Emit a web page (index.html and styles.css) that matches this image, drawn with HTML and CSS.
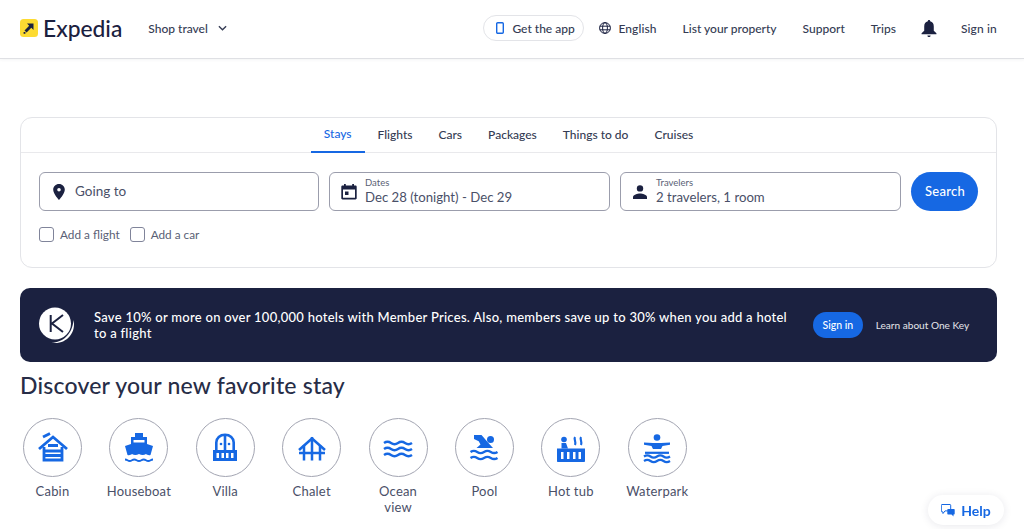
FILE: index.html
```html
<!DOCTYPE html>
<html lang="en">
<head>
  <meta charset="UTF-8" />
  <meta name="viewport" content="width=device-width, initial-scale=1" />
  <title>Expedia</title>
  <link rel="stylesheet" href="styles.css">
</head>
<body>

  <header class="topbar">
    <a class="logo">
      <svg class="logo-mark" viewBox="0 0 18 18" width="18" height="18">
        <rect width="18" height="18" rx="3.5" fill="#fddb32"/>
        <path d="M7 4.500h6.500V11L11.300 8.800 6.600 13.500 4.500 11.400l4.700-4.700z" fill="#1b2140"/>
        <rect x="3.600" y="13" width="1.800" height="1.800" fill="#1b2140"/>
      </svg>
      <span class="logo-text">Expedia</span>
    </a>
    <a class="nav-link shop">Shop travel
      <svg viewBox="0 0 10 6" width="9" height="6"><path d="M1 1l4 4 4-4" fill="none" stroke="#343b53" stroke-width="1.500"/></svg>
    </a>
    <nav class="nav-right">
      <a class="app-btn">
        <svg viewBox="0 0 8 12" width="8" height="12"><rect x=".7" y=".7" width="6.600" height="10.600" rx="1" fill="none" stroke="#1668e3" stroke-width="1.400"/></svg>
        Get the app
      </a>
      <a class="nav-link lang">
        <svg viewBox="0 0 12 12" width="12" height="12" fill="none" stroke="#1b2140" stroke-width="1">
          <circle cx="6" cy="6" r="5.400"/><ellipse cx="6" cy="6" rx="2.400" ry="5.400"/><path d="M.8 4.200h10.400M.8 7.800h10.400"/>
        </svg>
        English
      </a>
      <a class="nav-link">List your property</a>
      <a class="nav-link">Support</a>
      <a class="nav-link">Trips</a>
      <svg class="bell" viewBox="0 0 14 16" width="16" height="17"><path d="M7 0c.7 0 1.100.5 1.100 1.200 2.300.5 3.400 2.400 3.400 4.800v4L14 12.500V13.500H0V12.500L2.500 10V6c0-2.400 1.100-4.300 3.400-4.800C5.900.5 6.300 0 7 0zM5.500 14.500h3C8.500 15.400 7.800 16 7 16s-1.500-.6-1.500-1.500z" fill="#1b2140"/></svg>
      <a class="nav-link signin">Sign in</a>
    </nav>
  </header>

  <main class="content">
    <section class="search-card">
      <div class="tabs">
        <a class="tab active">Stays</a>
        <a class="tab">Flights</a>
        <a class="tab">Cars</a>
        <a class="tab">Packages</a>
        <a class="tab">Things to do</a>
        <a class="tab">Cruises</a>
      </div>
      <div class="search-body">
        <div class="fields">
          <div class="field">
            <svg viewBox="-2 0 16 16" width="16" height="16"><path fill-rule="evenodd" d="M6 0c3.300 0 5.800 2.500 5.800 5.700C11.800 9.800 6 16 6 16S.2 9.800.2 5.700C.2 2.500 2.700 0 6 0zm0 4a1.800 1.800 0 100 3.600A1.800 1.800 0 006 4z" fill="#1b2140"/></svg>
            <span class="placeholder">Going to</span>
          </div>
          <div class="field">
            <svg viewBox="0 0 16 16" width="16" height="16"><path fill-rule="evenodd" d="M3 0h1.800v1.500h6.400V0H13v1.500h1.500c.6 0 1.200.6 1.200 1.200v11.600c0 .6-.6 1.200-1.200 1.200h-13C.9 15.500.3 14.900.3 14.300V2.700c0-.6.600-1.200 1.200-1.200H3zM2 5.500v8.300h12V5.500z" fill="#1b2140"/><rect x="4" y="7.500" width="3.500" height="3.500" fill="#1b2140"/></svg>
            <div class="field-text">
              <span class="field-label">Dates</span>
              <span class="field-value">Dec 28 (tonight) - Dec 29</span>
            </div>
          </div>
          <div class="field">
            <svg viewBox="-1 0 16 14" width="16" height="14"><circle cx="7" cy="3.400" r="3.200" fill="#1b2140"/><path d="M0 14v-2c0-2.300 4.500-3.500 7-3.500s7 1.200 7 3.500v2z" fill="#1b2140"/></svg>
            <div class="field-text">
              <span class="field-label">Travelers</span>
              <span class="field-value">2 travelers, 1 room</span>
            </div>
          </div>
          <button class="search-btn">Search</button>
        </div>
        <div class="checks">
          <label class="check"><span class="box"></span>Add a flight</label>
          <label class="check"><span class="box"></span>Add a car</label>
        </div>
      </div>
    </section>

    <section class="banner">
      <svg class="onekey" viewBox="0 0 38 38" width="38" height="38">
        <circle cx="16" cy="16.500" r="16" fill="#fff"/>
        <path d="M34.500 13C37.500 26 27 38 12.500 35.800 24 35.500 33.500 27 34.500 13z" fill="#fff"/>
        <path d="M11.700 8v17M24 8l-11 8.500L24 25" fill="none" stroke="#1b2140" stroke-width="2"/>
      </svg>
      <p class="banner-text">Save 10% or more on over 100,000 hotels with Member Prices. Also, members save up to 30% when you add a hotel to a flight</p>
      <a class="banner-signin">Sign in</a>
      <a class="banner-link">Learn about One Key</a>
    </section>

    <h2 class="section-title">Discover your new favorite stay</h2>

    <div class="stays">
      <div class="stay">
        <div class="stay-icon">
          <svg viewBox="0 0 36 36" width="36" height="36" fill="none" stroke="#1668e3" stroke-width="2.800">
            <path d="M4 19L18 7l14 12"/><path d="M9 17v14.500M27 17v14.500M13 15.500h10M8 21h20M8 25.500h20M8 30h20"/>
            <path d="M8 7l7-3.500"/>
          </svg>
        </div>
        <span class="stay-name">Cabin</span>
      </div>
      <div class="stay">
        <div class="stay-icon">
          <svg viewBox="0 0 36 36" width="36" height="36">
            <g fill="#1668e3">
              <path d="M14 3h8v4h-8z"/>
              <path fill-rule="evenodd" d="M10 7h16v7l6 2-2.500 9c-2 .5-3.500-.2-4.500-1-2 1.300-4.500 1.300-7 0-2.500 1.300-5 1.300-7 0-1 .8-2.500 1.500-4.500 1L4 16l6-2zm2.500 3v2.500h11V10z"/>
            </g>
            <path d="M4 29.500c2.500 0 2.500 1.500 4.700 1.500s2.300-1.500 4.600-1.500 2.300 1.500 4.700 1.500 2.400-1.500 4.700-1.500 2.300 1.500 4.600 1.500 2.300-1.500 4.700-1.500" fill="none" stroke="#1668e3" stroke-width="1.800"/>
          </svg>
        </div>
        <span class="stay-name">Houseboat</span>
      </div>
      <div class="stay">
        <div class="stay-icon">
          <svg viewBox="0 0 36 36" width="36" height="36">
            <path d="M9.300 20v-7.500C9.300 8 13 4.800 18 4.800s8.700 3.200 8.700 7.700V20M18 5v15" fill="none" stroke="#1668e3" stroke-width="2.600"/>
            <circle cx="14" cy="14" r="1.300" fill="#1668e3"/><circle cx="22" cy="14" r="1.300" fill="#1668e3"/>
            <path fill-rule="evenodd" d="M6 20h24v11H6zm3.500 3v5h2.500v-5zm5 0v5H17v-5zm4.500 0v5h2.500v-5zm5 0v5h2.500v-5z" fill="#1668e3"/>
          </svg>
        </div>
        <span class="stay-name">Villa</span>
      </div>
      <div class="stay">
        <div class="stay-icon">
          <svg viewBox="0 0 36 36" width="36" height="36" fill="none" stroke="#1668e3" stroke-width="2.500">
            <path d="M5 20L18 8.500 31 20"/><path d="M10 15v15.500M18 7v23.500M26 15v15.500M5 23h26"/>
          </svg>
        </div>
        <span class="stay-name">Chalet</span>
      </div>
      <div class="stay">
        <div class="stay-icon">
          <svg viewBox="0 0 36 36" width="36" height="36" fill="none" stroke="#1668e3" stroke-width="2.500">
            <path d="M4 13c2.400-1.600 4.700-1.600 7 0s4.700 1.600 7 0 4.700-1.600 7 0 4.700 1.600 7 0"/>
            <path d="M4 19c2.400-1.600 4.700-1.600 7 0s4.700 1.600 7 0 4.700-1.600 7 0 4.700 1.600 7 0"/>
            <path d="M4 25c2.400-1.600 4.700-1.600 7 0s4.700 1.600 7 0 4.700-1.600 7 0 4.700 1.600 7 0"/>
          </svg>
        </div>
        <span class="stay-name">Ocean<br>view</span>
      </div>
      <div class="stay">
        <div class="stay-icon">
          <svg viewBox="0 0 36 36" width="36" height="36">
            <circle cx="24.500" cy="9.500" r="3.500" fill="#1668e3"/>
            <path d="M8 5h7.500l6.500 7.500 5 5.500H10.500l4-3.500-1.800-3.200L8 9z" fill="#1668e3"/>
            <path d="M4.500 22c2.300-1.500 4.500-1.500 6.700 0s4.500 1.500 6.800 0 4.500-1.500 6.800 0 4.400 1.500 6.700 0M4.500 28c2.300-1.500 4.500-1.500 6.700 0s4.500 1.500 6.800 0 4.500-1.500 6.800 0 4.400 1.500 6.700 0" fill="none" stroke="#1668e3" stroke-width="2.400"/>
          </svg>
        </div>
        <span class="stay-name">Pool</span>
      </div>
      <div class="stay">
        <div class="stay-icon">
          <svg viewBox="0 0 36 36" width="36" height="36">
            <circle cx="11" cy="9.500" r="2.800" fill="#1668e3"/>
            <path d="M22 7c-1.500 2.500 1.500 4.500 0 8M28 7c-1.500 2.500 1.500 4.500 0 8" fill="none" stroke="#1668e3" stroke-width="2.200"/>
            <path d="M8.500 13h4.500l2 5.500H8.500z" fill="#1668e3"/>
            <path fill-rule="evenodd" d="M4 18.500h28V31c0 .6-.5 1-1 1H5c-.6 0-1-.4-1-1zm4 3.500v7h2.500v-7zm6 0v7h2.500v-7zm6 0v7h2.500v-7zm5.500 0v7H28v-7z" fill="#1668e3"/>
          </svg>
        </div>
        <span class="stay-name">Hot tub</span>
      </div>
      <div class="stay">
        <div class="stay-icon">
          <svg viewBox="0 0 36 36" width="36" height="36">
            <circle cx="18" cy="7.500" r="3.300" fill="#1668e3"/>
            <path d="M5 12.500l9 .5h8l9-.5v2.200l-7.500 1.300-1.500 3h-8l-1.500-3L5 14.700z" fill="#1668e3"/>
            <path d="M6 22.800h24" stroke="#1668e3" stroke-width="2.200"/>
            <path d="M5 26.500c2.200-1.500 4.400-1.500 6.500 0s4.400 1.500 6.500 0 4.400-1.500 6.500 0 4.300 1.500 6.500 0M5 31c2.200-1.500 4.400-1.500 6.500 0s4.400 1.500 6.500 0 4.400-1.500 6.500 0 4.300 1.500 6.500 0" fill="none" stroke="#1668e3" stroke-width="2.200"/>
          </svg>
        </div>
        <span class="stay-name">Waterpark</span>
      </div>
    </div>
  </main>

  <a class="help">
    <svg viewBox="0 0 14 13" width="14" height="13">
      <path d="M1 .5h8c.4 0 .7.300.7.700v5c0 .4-.3.700-.7.700H4L2 9.500V7.900H1c-.4 0-.7-.3-.7-.7v-6C.3.800.6.500 1 .5z" fill="none" stroke="#1668e3" stroke-width="1"/>
      <path d="M7 5h6c.4 0 .7.300.7.700v4c0 .4-.3.700-.7.700h-.5v2l-2-2H7c-.4 0-.7-.3-.7-.7v-4C6.300 5.300 6.600 5 7 5z" fill="#1668e3"/>
    </svg>
    Help
  </a>

</body>
</html>
```

FILE: styles.css
```css
* {
  box-sizing: border-box;
}
body {
  margin: 0;
  height: 529px;
  overflow: hidden;
  background: #fff;
  color: #343b53;
  font-family: 'Lato', sans-serif;
  font-size: 13px;
}
a {
  text-decoration: none;
  color: inherit;
}

.topbar {
  height: 59px;
  display: flex;
  align-items: center;
  padding: 0 27px 2px 20px;
  border-bottom: 1px solid #dfe0e4;
  box-shadow: 0 1px 3px rgba(27, 33, 64, 0.05);
  font-weight: 500;
}
.logo {
  display: flex;
  align-items: center;
  gap: 5px;
}
.logo-text {
  font-size: 22.800px;
  color: #1b2140;
}
.nav-link {
  display: flex;
  align-items: center;
  font-size: 12px;
}
.shop {
  margin-left: 26px;
  gap: 10px;
}
.nav-right {
  margin-left: auto;
  display: flex;
  align-items: center;
  gap: 26px;
}
.app-btn {
  display: flex;
  align-items: center;
  gap: 8px;
  width: 101px;
  height: 26px;
  padding: 0 0 0 12px;
  margin-right: -11px;
  border: 1px solid #e3e4e8;
  border-radius: 13px;
  font-size: 12px;
}
.lang {
  gap: 7px;
  letter-spacing: 0.1px;
}
.bell {
  margin: 0 -2px 0 -1px;
}
.signin {
  letter-spacing: 0.15px;
}

.content {
  padding: 58px 27px 0 20px;
}
.search-card {
  height: 151px;
  border: 1px solid #e3e4e8;
  border-radius: 12px;
}
.tabs {
  display: flex;
  justify-content: center;
  height: 35px;
  border-bottom: 1px solid #e9e9ec;
}
.tab {
  display: flex;
  align-items: center;
  height: 35px;
  padding: 0 13px 2px;
  font-size: 12px;
  font-weight: 500;
}
.tab.active {
  color: #1668e3;
  border-bottom: 2px solid #1668e3;
}
.search-body {
  padding: 19px 18px 0;
}
.fields {
  display: flex;
  gap: 10px;
}
.field {
  flex: 1;
  height: 39px;
  display: flex;
  align-items: center;
  gap: 8px;
  padding: 0 11px;
  border: 1px solid #9b9dac;
  border-radius: 6px;
}
.field:first-child {
  flex: none;
  width: 280px;
}
.placeholder {
  font-size: 13.500px;
  margin-bottom: 2px;
  color: #4a5068;
}
.field-text {
  display: flex;
  flex-direction: column;
}
.field-label {
  font-size: 9.500px;
  line-height: 11px;
  color: #5a5f75;
}
.field-value {
  font-size: 13.200px;
  line-height: 18px;
  color: #4a5068;
}
.search-btn {
  flex: none;
  width: 67px;
  height: 39px;
  padding: 0 0 2px 1px;
  border: 0;
  border-radius: 20px;
  background: #1668e3;
  color: #fff;
  font-family: inherit;
  font-size: 13px;
  font-weight: 500;
  letter-spacing: 0.3px;
}
.checks {
  display: flex;
  gap: 10px;
  margin-top: 16px;
}
.check {
  display: flex;
  align-items: center;
  gap: 6px;
  font-size: 11.800px;
  color: #5a5f75;
}
.box {
  width: 15px;
  height: 15px;
  border: 1px solid #80849a;
  border-radius: 3px;
}

.banner {
  height: 74px;
  margin-top: 20px;
  display: flex;
  align-items: center;
  padding: 0 27px 0 19px;
  background: #1b2140;
  border-radius: 10px;
  color: #fff;
}
.onekey {
  flex: none;
  margin-top: 2px;
}
.banner-text {
  margin: 0 0 0 17px;
  width: 700px;
  flex: none;
  font-size: 13px;
  line-height: 16px;
  letter-spacing: 0.27px;
  font-weight: 500;
}
.banner-signin {
  flex: none;
  height: 26px;
  padding: 0 9.500px;
  margin-left: 19px;
  display: flex;
  align-items: center;
  border-radius: 13px;
  background: #1668e3;
  font-size: 10.500px;
  font-weight: 500;
}
.banner-link {
  margin-left: 13px;
  font-size: 10.100px;
  white-space: nowrap;
  color: #e4e5ea;
}

.section-title {
  margin: 9px 0 0;
  font-size: 23px;
  line-height: 28px;
  font-weight: 500;
  letter-spacing: 0.2px;
  color: #272d47;
}

.stays {
  display: flex;
  gap: 16.400px;
  margin: 19px 0 0 -2.500px;
}
.stay {
  width: 70px;
  display: flex;
  flex-direction: column;
  align-items: center;
  text-align: center;
}
.stay-icon {
  width: 59px;
  height: 59px;
  display: flex;
  align-items: center;
  justify-content: center;
  border: 1px solid #a3a5b2;
  border-radius: 50%;
}
.stay-name {
  margin-top: 6px;
  font-size: 13px;
  line-height: 16px;
  letter-spacing: 0.2px;
  color: #4a5068;
  white-space: nowrap;
}

.help {
  position: fixed;
  left: 928px;
  top: 495px;
  width: 76px;
  height: 30px;
  display: flex;
  align-items: center;
  justify-content: center;
  gap: 6px;
  background: #fff;
  border-radius: 15px;
  box-shadow: 0 1px 8px rgba(27, 33, 64, 0.1);
  color: #1668e3;
  font-size: 14px;
  font-weight: 700;
}
```
